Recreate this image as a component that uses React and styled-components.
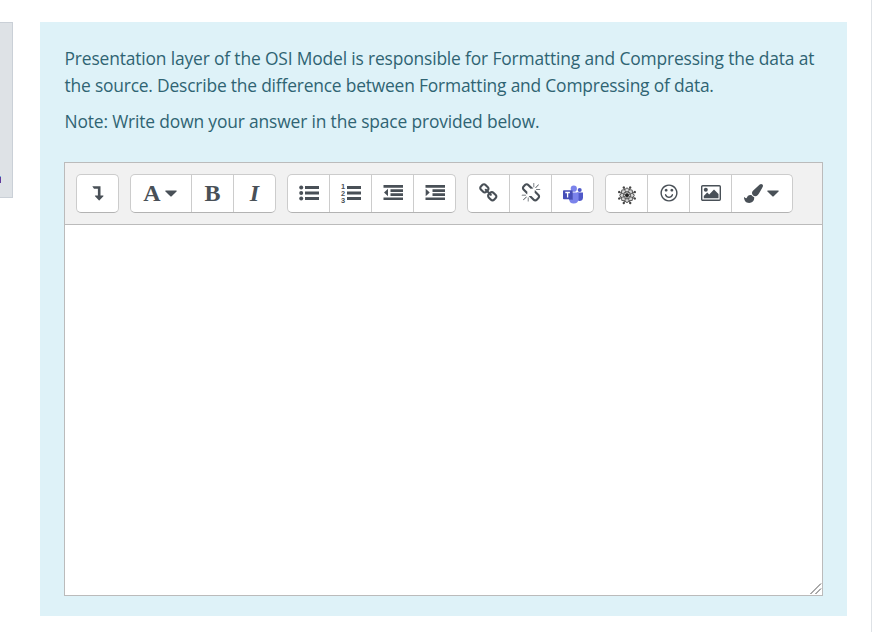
import React from 'react';
import styled, { createGlobalStyle } from 'styled-components';

const GlobalStyle = createGlobalStyle`
  * {
    box-sizing: border-box;
  }

  body {
    margin: 0;
    background: #fff;
    font-family: 'Open Sans', 'Noto Sans', sans-serif;
  }
`;

const Page = styled.div`
  display: flex;
  align-items: flex-start;
  width: 872px;
  height: 632px;
  padding-top: 22px;
  overflow: hidden;
  border-right: 1px solid #dee2e6;
`;

const InfoBox = styled.aside`
  display: flex;
  align-items: flex-end;
  width: 13px;
  height: 176px;
  padding-bottom: 14px;
  margin-right: 27px;
  background: #dee2e6;
  border: 1px solid #cad0d7;
  border-left: 0;
`;

const FlagMark = styled.span`
  width: 1px;
  height: 7px;
  background: #5f3a9c;
  border-top: 1px solid #6ab2dc;
`;

const Question = styled.main`
  width: 807px;
  height: 594px;
  padding: 23px 24px 20px;
  background: #def2f8;
`;

const Paragraph = styled.p`
  margin: 0 0 9px;
  padding-left: 0.5px;
  color: #2f6473;
  font-size: 17.4px;
  line-height: 27px;
  letter-spacing: -0.15px;
  white-space: nowrap;
`;

const TightLine = styled.span`
  letter-spacing: -0.19px;
`;

const Editor = styled.section`
  display: flex;
  flex-direction: column;
  width: 759px;
  height: 434px;
  margin-top: 27px;
  border: 1px solid #bbb;
  background: #fff;
`;

const Toolbar = styled.div`
  display: flex;
  gap: 11px;
  height: 62px;
  padding: 11px;
  background: #f1f1f1;
  border-bottom: 1px solid #bbb;
`;

const ButtonGroup = styled.div`
  display: flex;
  height: 39px;
  background: #fff;
  border: 1px solid #ccc;
  border-bottom-color: #b3b3b3;
  border-radius: 5px;
`;

const ToolButton = styled.button`
  display: flex;
  align-items: center;
  justify-content: center;
  gap: 4px;
  width: ${props => (props.$wide ? 61 : 42)}px;
  padding: 0 ${props => (props.$wide ? 2 : 0)}px 1px 0;
  background: transparent;
  border: 0;
  border-right: 1px solid #ccc;
  color: #495057;

  &:last-child {
    width: ${props => (props.$wide ? 60 : 41)}px;
    border-right: 0;
  }

  &:first-child:not(:last-child) {
    width: ${props => (props.$wide ? 61 : 42)}px;
  }

  svg {
    display: block;
    flex: none;
    overflow: visible;
  }
`;

const Letter = styled.span`
  font: bold 24px/37px 'Liberation Serif', serif;
  font-style: ${props => (props.$italic ? 'italic' : 'normal')};
`;

const Answer = styled.textarea`
  flex: 1;
  width: 100%;
  padding: 8px;
  border: 0;
  outline: 0;
  resize: none;
  background: transparent;
  font: inherit;
`;

const Body = styled.div`
  display: flex;
  flex: 1;
  position: relative;
`;

const Grip = styled.svg`
  position: absolute;
  right: 0;
  bottom: 0;
`;

const glyphs = {
  link: 'M1456 1216q0-40-28-68l-208-208q-28-28-68-28-42 0-72 32 3 3 19 18.5t21.5 21.5 15 19 13 25.5 3.5 27.5q0 40-28 68t-68 28q-15 0-27.5-3.5t-25.5-13-19-15-21.5-21.5-18.5-19q-33 31-33 73 0 40 28 68l206 207q27 27 68 27 40 0 68-26l147-146q28-28 28-67zm-703-705q0-40-28-68l-206-207q-28-28-68-28-39 0-68 27l-147 146q-28 28-28 67 0 40 28 68l208 208q27 27 68 27 42 0 72-31-3-3-19-18.5t-21.5-21.5-15-19-13-25.5-3.5-27.5q0-40 28-68t68-28q15 0 27.5 3.5t25.5 13 19 15 21.5 21.5 18.5 19q33-31 33-73zm895 705q0 120-85 203l-147 146q-83 83-203 83-121 0-204-85l-206-207q-83-83-83-203 0-123 88-209l-88-88q-86 88-208 88-120 0-204-84l-208-208q-84-84-84-204t85-203l147-146q83-83 203-83 121 0 204 85l206 207q83 83 83 203 0 123-88 209l88 88q86-88 208-88 120 0 204 84l208 208q84 84 84 204z',
  unlink: 'M503 1271l-256 256q-10 9-23 9-12 0-23-9-9-10-9-23t9-23l256-256q10-9 23-9t23 9q9 10 9 23t-9 23zm169 41v320q0 14-9 23t-23 9-23-9-9-23v-320q0-14 9-23t23-9 23 9 9 23zm-224-224q0 14-9 23t-23 9h-320q-14 0-23-9t-9-23 9-23 23-9h320q14 0 23 9t9 23zm1264 128q0 120-85 203l-147 146q-83 83-203 83-121 0-204-85l-334-335q-21-21-42-56l239-18 273 274q28 28 68 28.5t68-27.5l147-146q28-28 28-67 0-40-28-68l-274-275 18-239q35 21 56 42l336 336q84 86 84 204zm-617-724l-239 18-273-274q-28-28-68-28-39 0-68 27l-147 146q-28 28-28 67 0 40 28 68l274 274-18 240q-35-21-56-42l-336-336q-84-86-84-204 0-120 85-203l147-146q83-83 203-83 121 0 204 85l334 335q21 21 42 56zm633 84q0 14-9 23t-23 9h-320q-14 0-23-9t-9-23 9-23 23-9h320q14 0 23 9t9 23zm-544-544v320q0 14-9 23t-23 9-23-9-9-23v-320q0-14 9-23t23-9 23 9 9 23zm407 151l-256 256q-11 9-23 9t-23-9q-9-10-9-23t9-23l256-256q10-9 23-9t23 9q9 10 9 23t-9 23z',
  smile: 'M1262 1075q-37 121-138 195t-228 74-228-74-138-195q-8-25 4-48.5t38-31.5q25-8 48.5 4t31.5 38q25 80 92.5 129.5t151.5 49.5 151.5-49.5 92.5-129.5q8-26 32-38t49-4 37 31.5 4 48.5zm-494-435q0 53-37.5 90.5t-90.5 37.5-90.5-37.5-37.5-90.5 37.5-90.5 90.5-37.5 90.5 37.5 37.5 90.5zm512 0q0 53-37.5 90.5t-90.5 37.5-90.5-37.5-37.5-90.5 37.5-90.5 90.5-37.5 90.5 37.5 37.5 90.5zm256 256q0-130-51-248.5t-136.5-204-204-136.5-248.5-51-248.5 51-204 136.5-136.5 204-51 248.5 51 248.5 136.5 204 204 136.5 248.5 51 248.5-51 204-136.5 136.5-204 51-248.5zm128 0q0 209-103 385.5t-279.5 279.5-385.5 103-385.5-103-279.5-279.5-103-385.5 103-385.5 279.5-279.5 385.5-103 385.5 103 279.5 279.5 103 385.5z',
  brush: 'M1615 0q70 0 122.5 46.5t52.5 116.5q0 63-45 151-332 629-465 752-97 91-218 91-126 0-216.5-92.5t-90.5-219.5q0-128 92-212l638-579q59-54 130-54zm-909 1034q39 76 106.5 130t150.5 76l1 71q4 213-129.5 347t-348.5 134q-123 0-218-46.5t-152.5-127.5-86.5-183-29-220q7 5 41 30t62 44.5 59 36.5 46 17q41 0 55-37 25-66 57.5-112.5t69.5-76 88-47.5 103-25.5 125-10.5z',
};

const Glyph = ({ name, size = 20 }) => (
  <svg width={size} height={size} viewBox="0 0 1792 1792" fill="currentColor">
    <path d={glyphs[name]} />
  </svg>
);

const Caret = () => (
  <svg width="12" height="7" viewBox="0 0 12 7" fill="currentColor">
    <path d="M.8.5h10.4q.9.2.3 1L6.7 6.2q-.7.6-1.4 0L.5 1.5Q-.1.7.8.5Z" />
  </svg>
);

const ToggleIcon = () => (
  <svg width="20" height="20" viewBox="0 0 20 20" fill="currentColor">
    <path d="M4.3 3.2h8.2v9.3h2.6q.7.1.3.7l-3.8 4.1q-.4.4-.8 0L7 13.2q-.4-.6.3-.7h2.6V5.7H6z" />
  </svg>
);

const BulletIcon = () => (
  <svg width="20" height="20" viewBox="0 0 20 20" fill="currentColor">
    <circle cx="2.2" cy="4.5" r="2" />
    <circle cx="2.2" cy="10" r="2" />
    <circle cx="2.2" cy="15.5" r="2" />
    <path d="M6 3h14v3H6zM6 8.5h14v3H6zM6 14h14v3H6z" />
  </svg>
);

const NumberText = styled.text`
  font: bold 7.4px 'Liberation Sans', sans-serif;
`;

const NumberIcon = () => (
  <svg width="20" height="20" viewBox="0 0 20 20" fill="currentColor">
    <NumberText x="0" y="5.6">1</NumberText>
    <NumberText x="0" y="12.6">2</NumberText>
    <NumberText x="0" y="19.6">3</NumberText>
    <path d="M6 3h14v3H6zM6 8.5h14v3H6zM6 14h14v3H6z" />
  </svg>
);

const IndentIcon = ({ arrow }) => (
  <svg width="20" height="20" viewBox="0 0 20 20" fill="currentColor">
    <path d="M.5 2h19.5v2.7H.5zM7.5 6.2H20v2.7H7.5zM7.5 10.3H20V13H7.5zM.5 14.4H20v2.7H.5z" />
    <path d={arrow} />
  </svg>
);

const TeamsIcon = () => (
  <svg width="20" height="20" viewBox="0 -1.5 20 20">
    <circle cx="16.7" cy="5.5" r="2" fill="#5059c9" />
    <path d="M14 8h6v5.2q-.3 3.4-3.8 3.3L14 15.5z" fill="#5059c9" />
    <circle cx="10.8" cy="4.2" r="3.1" fill="#7b83eb" />
    <path d="M6 8h9.6v6.5q-.5 4.5-5 4.6Q6.5 19 6 14.5z" fill="#7b83eb" />
    <path d="M7.8 6H10v9.3H6.1V8h1.7z" fill="#4148a5" opacity=".6" />
    <rect x="0" y="5.8" width="9" height="9" rx=".8" fill="#464eb8" />
    <path d="M2.3 8h4.6M4.6 8v5" stroke="#fff" strokeWidth="1.3" />
  </svg>
);

const WebIcon = () => (
  <svg width="20" height="20" viewBox="-10 -12.3 20 20" fill="none" stroke="#555">
    <circle r="6.7" fill="#aaa" stroke="none" opacity=".45" />
    {[0, 45, 90, 135, 180, 225, 270, 315].map(angle => (
      <g key={angle} transform={`rotate(${angle + 22.5})`}>
        <path d="M0 0V-9" strokeWidth=".8" />
        <path d="M-1.5-3.7Q0-2.7 1.5-3.7M-2.8-6.9Q0-5.2 2.8-6.9" strokeWidth=".9" />
        <circle cy="-8.4" r="1.2" fill="#444" stroke="none" />
      </g>
    ))}
    <circle r="1.8" fill="#222" stroke="none" />
  </svg>
);

const PictureIcon = () => (
  <svg width="20" height="16" viewBox="0 0 20 16" fill="currentColor">
    <rect x=".7" y=".7" width="18.6" height="14.6" rx="1" fill="none" stroke="currentColor" strokeWidth="1.4" />
    <circle cx="4.8" cy="4.8" r="2" />
    <path d="M2.8 13.2v-2.3l3.4-3.3 2 1.9 4.8-5 4.5 4.6v4.1z" />
  </svg>
);

const App = () => {
  return (
    <>
      <GlobalStyle />
      <Page>
        <InfoBox>
          <FlagMark />
        </InfoBox>
        <Question>
          <Paragraph>
            Presentation layer of the OSI Model is responsible for Formatting and Compressing the data at
            <br />
            <TightLine>the source. Describe the difference between Formatting and Compressing of data.</TightLine>
          </Paragraph>
          <Paragraph>Note: Write down your answer in the space provided below.</Paragraph>
          <Editor>
            <Toolbar>
              <ButtonGroup>
                <ToolButton aria-label="Show more buttons"><ToggleIcon /></ToolButton>
              </ButtonGroup>
              <ButtonGroup>
                <ToolButton $wide aria-label="Paragraph styles">
                  <Letter>A</Letter>
                  <Caret />
                </ToolButton>
                <ToolButton aria-label="Bold"><Letter>B</Letter></ToolButton>
                <ToolButton aria-label="Italic"><Letter $italic>I</Letter></ToolButton>
              </ButtonGroup>
              <ButtonGroup>
                <ToolButton aria-label="Unordered list"><BulletIcon /></ToolButton>
                <ToolButton aria-label="Ordered list"><NumberIcon /></ToolButton>
                <ToolButton aria-label="Outdent"><IndentIcon arrow="M5 5.8v7.4L1 9.6z" /></ToolButton>
                <ToolButton aria-label="Indent"><IndentIcon arrow="M.7 5.8v7.4l4-3.6z" /></ToolButton>
              </ButtonGroup>
              <ButtonGroup>
                <ToolButton aria-label="Link"><Glyph name="link" /></ToolButton>
                <ToolButton aria-label="Unlink"><Glyph name="unlink" /></ToolButton>
                <ToolButton aria-label="Teams meeting"><TeamsIcon /></ToolButton>
              </ButtonGroup>
              <ButtonGroup>
                <ToolButton aria-label="Web content"><WebIcon /></ToolButton>
                <ToolButton aria-label="Emoji picker"><Glyph name="smile" /></ToolButton>
                <ToolButton aria-label="Insert image"><PictureIcon /></ToolButton>
                <ToolButton $wide aria-label="Font colour">
                  <Glyph name="brush" size={19} />
                  <Caret />
                </ToolButton>
              </ButtonGroup>
            </Toolbar>
            <Body>
              <Answer aria-label="Answer" />
              <Grip width="13" height="13" viewBox="0 0 13 13" fill="none" stroke="#555" strokeWidth="1">
                <path d="M1.5 12L12 1.5M6.5 12L12 6.5" />
              </Grip>
            </Body>
          </Editor>
        </Question>
      </Page>
    </>
  );
};

export default App;
